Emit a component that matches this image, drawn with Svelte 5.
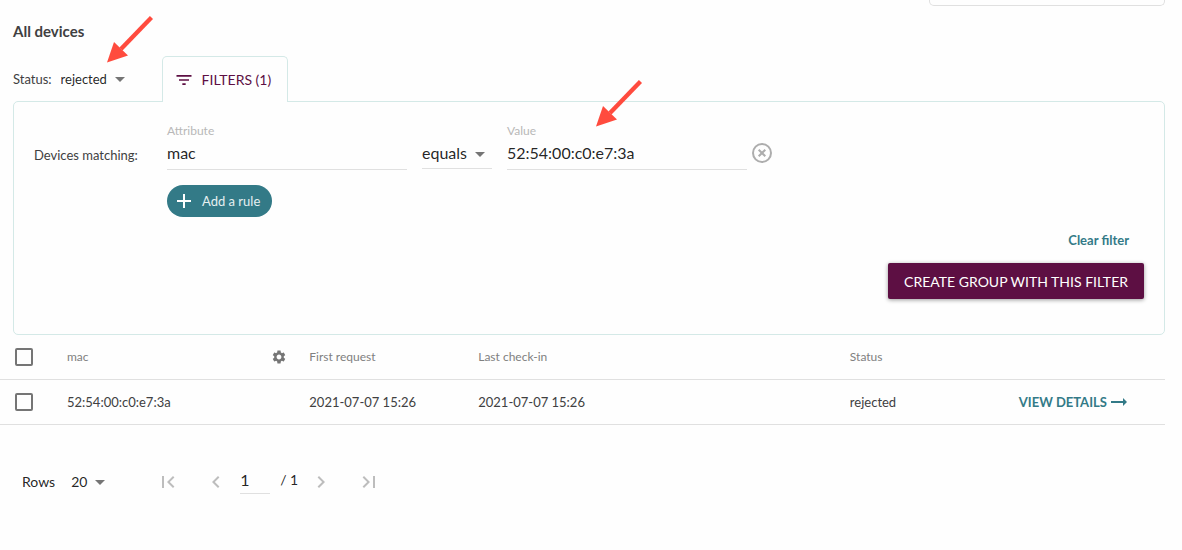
<script lang="ts">
  type Device = {
    mac: string;
    firstRequest: string;
    lastCheckin: string;
    status: string;
  };

  const devices: Device[] = [
    {
      mac: '52:54:00:c0:e7:3a',
      firstRequest: '2021-07-07 15:26',
      lastCheckin: '2021-07-07 15:26',
      status: 'rejected'
    }
  ];

  let attribute = $state('mac');
  let value = $state('52:54:00:c0:e7:3a');
  let page = $state('1');
</script>

{#snippet caret()}
  <svg class="caret" width="24" height="24" viewBox="0 0 24 24" aria-hidden="true">
    <path d="M7 10l5 5 5-5z" />
  </svg>
{/snippet}

{#snippet arrow()}
  <svg width="46" height="48" viewBox="0 0 46 48" aria-hidden="true">
    <path d="M44.5 1.5L14 33" stroke="#ff4b3e" stroke-width="4.4" />
    <path d="M0 46.500L7 26l14 13.500z" fill="#ff4b3e" />
  </svg>
{/snippet}

<div class="page">
  <div class="top-box"></div>

  <section class="devices">
    <h3>All devices</h3>

    <div class="toolbar">
      <div class="status">
        <label for="status">Status:</label>
        <div class="select">
          <select id="status">
            <option>rejected</option>
          </select>
          {@render caret()}
        </div>
      </div>
      <button class="tab">
        <svg width="20" height="20" viewBox="0 0 24 24" aria-hidden="true">
          <path d="M10 18h4v-2h-4v2zM3 6v2h18V6H3zm3 7h12v-2H6v2z" />
        </svg>
        FILTERS (1)
      </button>
      <div class="annotation on-status">{@render arrow()}</div>
    </div>

    <div class="filters">
      <div class="rule">
        <span class="matching">Devices matching:</span>
        <div class="field">
          <label for="attribute">Attribute</label>
          <input id="attribute" type="text" bind:value={attribute} />
        </div>
        <div class="select operator">
          <select aria-label="Operator">
            <option>equals</option>
          </select>
          {@render caret()}
        </div>
        <div class="field">
          <label for="value">Value</label>
          <input id="value" type="text" bind:value />
          <div class="annotation on-value">{@render arrow()}</div>
        </div>
        <button class="remove" aria-label="Remove rule">
          <svg width="20" height="20" viewBox="0 0 20 20">
            <circle cx="10" cy="10" r="9" />
            <path d="M6.700 6.700l6.600 6.600M13.300 6.700l-6.600 6.600" />
          </svg>
        </button>
      </div>

      <button class="add">
        <svg width="24" height="24" viewBox="0 0 24 24" aria-hidden="true">
          <path d="M19 13h-6v6h-2v-6H5v-2h6V5h2v6h6v2z" />
        </svg>
        Add a rule
      </button>

      <div class="actions">
        <a class="clear" href="#clear">Clear filter</a>
        <button class="create">CREATE GROUP WITH THIS FILTER</button>
      </div>
    </div>
  </section>

  <table>
    <colgroup>
      <col class="col-check" />
      <col class="col-mac" />
      <col class="col-date" />
      <col class="col-checkin" />
      <col class="col-status" />
      <col />
    </colgroup>
    <thead>
      <tr>
        <th class="check"><input type="checkbox" aria-label="Select all devices" /></th>
        <th>
          <div class="mac-head">
            mac
            <button class="gear" aria-label="Column settings">
              <svg width="16" height="16" viewBox="0 0 24 24">
                <path
                  d="M19.140 12.940c.04-.3.060-.61.060-.94 0-.32-.02-.64-.07-.94l2.030-1.580c.18-.14.230-.41.120-.61l-1.920-3.320c-.12-.22-.37-.29-.59-.22l-2.390.96c-.5-.38-1.030-.7-1.620-.94l-.36-2.540c-.04-.24-.24-.41-.48-.41h-3.840c-.24 0-.43.17-.47.41l-.36 2.540c-.59.24-1.130.57-1.620.94l-2.390-.96c-.22-.08-.47 0-.59.22L2.740 8.870c-.12.21-.08.47.12.61l2.030 1.580c-.05.3-.09.63-.09.94s.02.64.07.94l-2.030 1.580c-.18.14-.23.41-.12.61l1.920 3.320c.12.22.37.29.59.22l2.390-.96c.5.38 1.030.7 1.620.94l.36 2.540c.05.24.24.41.48.41h3.840c.24 0 .44-.17.47-.41l.36-2.540c.59-.24 1.130-.56 1.620-.94l2.390.96c.22.08.47 0 .59-.22l1.920-3.320c.12-.22.070-.47-.12-.61l-2.010-1.580zM12 15.600c-1.980 0-3.600-1.620-3.600-3.600s1.620-3.600 3.600-3.600 3.600 1.620 3.600 3.600-1.620 3.600-3.600 3.600z"
                />
              </svg>
            </button>
          </div>
        </th>
        <th>First request</th>
        <th>Last check-in</th>
        <th>Status</th>
        <th></th>
      </tr>
    </thead>
    <tbody>
      {#each devices as device}
        <tr>
          <td class="check"><input type="checkbox" aria-label="Select {device.mac}" /></td>
          <td>{device.mac}</td>
          <td>{device.firstRequest}</td>
          <td>{device.lastCheckin}</td>
          <td>{device.status}</td>
          <td>
            <a class="details" href="#details">
              VIEW DETAILS
              <svg width="16" height="10" viewBox="0 0 16 10" aria-hidden="true">
                <path d="M0 4h12V1l4 4-4 4V6H0z" />
              </svg>
            </a>
          </td>
        </tr>
      {/each}
    </tbody>
  </table>

  <footer>
    <label for="rows">Rows</label>
    <div class="select rows">
      <select id="rows">
        <option>20</option>
      </select>
      {@render caret()}
    </div>
    <nav>
      <button aria-label="First page">
        <svg width="24" height="24" viewBox="0 0 24 24">
          <path d="M18.410 16.590L13.820 12l4.590-4.590L17 6l-6 6 6 6zM6 6h2v12H6z" />
        </svg>
      </button>
      <button aria-label="Previous page">
        <svg width="24" height="24" viewBox="0 0 24 24">
          <path d="M15.410 7.410L14 6l-6 6 6 6 1.410-1.410L10.830 12z" />
        </svg>
      </button>
      <div class="page-number">
        <input type="text" aria-label="Page" bind:value={page} />
        <span>/ 1</span>
      </div>
      <button aria-label="Next page">
        <svg width="24" height="24" viewBox="0 0 24 24">
          <path d="M10 6L8.590 7.410 13.170 12l-4.580 4.590L10 18l6-6z" />
        </svg>
      </button>
      <button aria-label="Last page">
        <svg width="24" height="24" viewBox="0 0 24 24">
          <path d="M5.590 7.410L10.180 12l-4.590 4.590L7 18l6-6-6-6zM16 6h2v12h-2z" />
        </svg>
      </button>
    </nav>
  </footer>
</div>

<style>
  :global(body) {
    margin: 0;
    background: #fefefe;
  }

  .page {
    padding-right: 17px;
    font-family: Lato, sans-serif;
    font-size: 13px;
    line-height: 20px;
    color: #404041;
  }

  button,
  input,
  select {
    font: inherit;
    color: inherit;
    margin: 0;
    padding: 0;
    border: none;
    border-radius: 0;
    background: none;
    box-sizing: border-box;
  }

  button {
    cursor: pointer;
  }

  svg {
    display: block;
    flex: none;
  }

  a {
    color: #337a87;
    font-weight: bold;
    text-decoration: none;
  }

  .top-box {
    width: 234px;
    height: 5px;
    margin-left: auto;
    border: 1px solid #e0e0e0;
    border-top: none;
    border-radius: 0 0 5px 5px;
  }

  .devices {
    margin-left: 13px;
  }

  h3 {
    margin: 0;
    padding: 15px 0;
    font-size: 15px;
    line-height: 20px;
  }

  .toolbar {
    position: relative;
    display: flex;
    align-items: stretch;
    gap: 30px;
  }

  .status {
    display: flex;
    align-items: center;
    gap: 9px;
  }

  .select {
    position: relative;
    color: rgba(0, 0, 0, 0.87);
  }

  .select select {
    appearance: none;
    display: block;
    width: 100%;
    padding-right: 24px;
    outline: none;
  }

  .caret {
    position: absolute;
    right: 0;
    top: calc(50% - 12px);
    fill: #757575;
    pointer-events: none;
  }

  /* the tab covers the panel's top border */
  .tab {
    position: relative;
    z-index: 1;
    display: flex;
    align-items: center;
    gap: 8px;
    height: 46px;
    margin-bottom: -1px;
    padding: 0 16px 0 11px;
    border: 1px solid #d4e9e7;
    border-bottom: none;
    border-radius: 5px 5px 0 0;
    background: #fefefe;
    color: #5d0f43;
    font-size: 14px;
  }

  .tab svg {
    fill: #5d0f43;
  }

  .annotation {
    position: absolute;
    z-index: 2;
    pointer-events: none;
  }

  .on-status {
    left: 94px;
    top: -40px;
  }

  .on-value {
    left: 89px;
    top: -42px;
  }

  .filters {
    padding: 20px;
    border: 1px solid #d4e9e7;
    border-radius: 5px;
  }

  .rule {
    display: flex;
    align-items: flex-end;
    gap: 15px;
  }

  .matching {
    width: 118px;
    padding-bottom: 5px;
    white-space: nowrap;
  }

  .field {
    position: relative;
    width: 240px;
  }

  .field label {
    display: block;
    font-size: 12px;
    line-height: 18px;
    color: #b8b8b8;
  }

  .field input {
    display: block;
    width: 100%;
    height: 30px;
    padding-bottom: 4px;
    border-bottom: 1px solid #e0e0e0;
    font-size: 16px;
    color: rgba(0, 0, 0, 0.87);
    outline: none;
  }

  .operator {
    margin-bottom: 1px;
    width: 70px;
    font-size: 16px;
  }

  .operator select {
    height: 31px;
    border-bottom: 1px solid #e0e0e0;
  }

  .remove {
    margin: 0 0 7px -10px;
  }

  .remove svg {
    fill: none;
    stroke: #adadad;
    stroke-width: 2;
  }

  .add {
    display: flex;
    align-items: center;
    gap: 6px;
    height: 32px;
    margin: 15px 0 0 133px;
    padding: 0 12px 0 5px;
    border-radius: 16px;
    background: #337a87;
    color: #e6f0f1;
  }

  .add svg {
    fill: #fff;
  }

  .actions {
    display: flex;
    flex-direction: column;
    align-items: flex-end;
    gap: 13px;
    padding: 13px 0 15px;
  }

  .clear {
    margin-right: 15px;
  }

  .create {
    height: 36px;
    padding: 2px 16px 0;
    border-radius: 2px;
    background: #5d0f43;
    color: #fff;
    font-size: 14px;
    box-shadow: 0 1px 4px rgba(0, 0, 0, 0.4);
  }

  table {
    width: 100%;
    table-layout: fixed;
    border-collapse: collapse;
  }

  .col-check {
    width: 48px;
  }

  .col-mac {
    width: 20.8%;
  }

  .col-date,
  .col-status {
    width: 14.5%;
  }

  .col-checkin {
    width: 31.9%;
  }

  th,
  td {
    height: 44px;
    padding: 0 0 0 19px;
    border-bottom: 1px solid #e0e0e0;
    text-align: left;
    white-space: nowrap;
  }

  th {
    font-size: 12px;
    font-weight: normal;
    color: #808080;
  }

  .check {
    padding-left: 15px;
  }

  input[type='checkbox'] {
    appearance: none;
    display: block;
    width: 18px;
    height: 18px;
    border: 2px solid #757575;
    border-radius: 2px;
  }

  .mac-head {
    display: flex;
    align-items: center;
    justify-content: space-between;
    padding-right: 3px;
  }

  .gear svg {
    fill: #757575;
  }

  .details {
    display: inline-flex;
    align-items: center;
    gap: 4px;
  }

  .details svg {
    fill: #337a87;
  }

  footer {
    display: flex;
    align-items: center;
    padding: 41px 22px 20px;
    font-size: 14px;
    color: rgba(0, 0, 0, 0.87);
  }

  .rows {
    width: 41px;
    margin: 0 44px 0 16px;
  }

  nav {
    display: flex;
    align-items: center;
    gap: 24px;
  }

  nav button svg {
    fill: #bdbdbd;
  }

  .page-number {
    display: flex;
    align-items: center;
    gap: 10px;
    margin: 0 -13px 0 -12px;
    padding-bottom: 4px;
  }

  .page-number input {
    width: 30px;
    height: 28px;
    border-bottom: 1px solid #e0e0e0;
    font-size: 16px;
    outline: none;
  }
</style>
